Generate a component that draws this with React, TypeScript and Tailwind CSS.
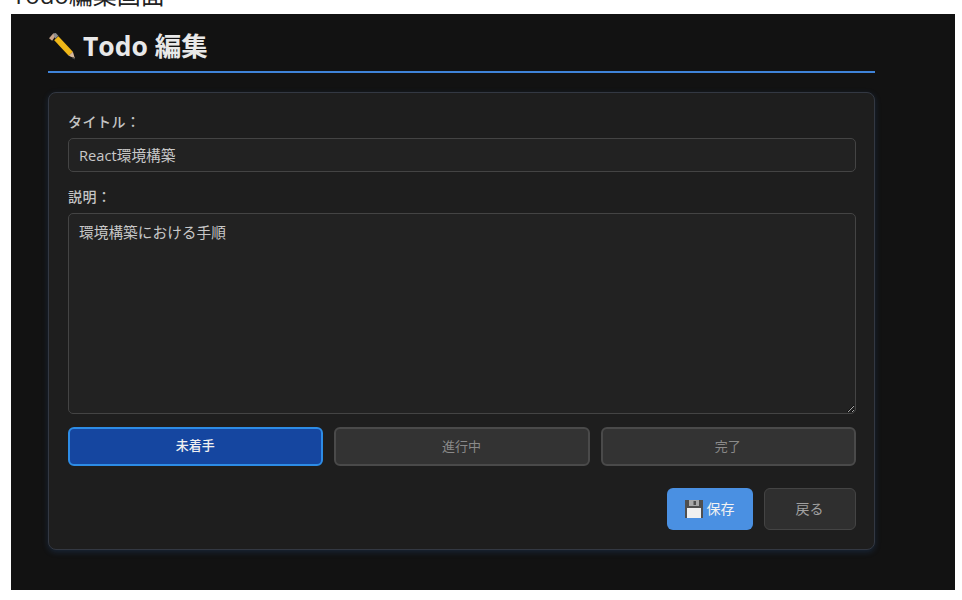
const fontStack = "[font-family:'Open_Sans','Noto_Sans_CJK_JP',sans-serif]";

function PencilIcon() {
  return (
    <svg width="29" height="29" viewBox="0 0 28 28" className="shrink-0">
      <path d="M1 6 L5 1.5 L8 3 L4 8.5 Z" fill="#c9a58c" />
      <path d="M5 1.5 L7.5 1 L10 3.5 L7 6.5 Z" fill="#8d8d8d" />
      <path d="M6 8 L10 4 L24 19 L20 23 Z" fill="#f0b818" />
      <path d="M20 23 L24 19 L26 25.5 Z" fill="#d9b99c" />
      <path d="M24 24 L26 25.5 L26 26.5 L23.5 25.5 Z" fill="#444444" />
    </svg>
  );
}

function FloppyIcon() {
  return (
    <svg width="18" height="18" viewBox="0 0 18 18" className="shrink-0">
      <path d="M0 0 H18 V18 H0 Z" fill="#4f4f4f" />
      <rect x="4" y="0" width="10" height="6" fill="#a8a8a8" />
      <rect x="8.5" y="1" width="2.5" height="4" fill="#4f4f4f" />
      <rect x="2" y="8" width="14" height="10" fill="#f0f0f0" />
    </svg>
  );
}

export default function App() {
  return (
    <div className={`h-[600px] w-[962px] overflow-hidden bg-white ${fontStack}`}>
      <div className="flex h-[14px] items-end overflow-hidden pl-[12px] text-[24px] leading-[24px] text-[#222222]">
        <span className="mb-[7px] shrink-0">Todo編集画面</span>
      </div>
      <main className="ml-[11px] h-[576px] w-[944px] bg-[#121212] pl-[37px] pr-[80px]">
        <h1 className="flex h-[59px] items-center gap-[6px] border-b-2 border-[#3f83d8] pt-[8px] text-[26.5px] font-bold text-[#e8e8e8]">
          <PencilIcon />
          <span>Todo 編集</span>
        </h1>
        <form className="mt-[19px] h-[458px] rounded-lg border border-[#333842] bg-[#1e1e1e] pl-[19px] pr-[18px] pt-[17px] shadow-[0_2px_6px_rgba(50,110,190,0.22)]">
          <label className="block text-sm font-medium leading-[23px] tracking-[0.5px] text-[#c4c4c4]">タイトル：</label>
          <input
            readOnly
            value="React環境構築"
            className="mt-[5px] block h-[34px] w-full rounded-[5px] border border-[#444444] bg-[#222222] px-[10px] pb-[2px] text-[14.7px] text-[#c8c8c8] outline-none"
          />
          <label className="mt-[13px] block text-sm font-medium leading-[23px] tracking-[0.5px] text-[#c4c4c4]">説明：</label>
          <textarea
            readOnly
            defaultValue="環境構築における手順"
            className="mt-[5px] block h-[201px] w-full rounded-[5px] border border-[#444444] bg-[#222222] px-[10px] pb-[8px] pt-[7px] text-[14.7px] text-[#c8c8c8] outline-none"
          />
          <div className="mt-[13px] grid grid-cols-3 gap-[11px]">
            <button type="button" className="h-[39px] rounded-[6px] border-2 border-[#2d8ce6] bg-[#1546a0] pb-[1px] pr-[1px] text-[13px] font-medium text-[#f0f0f0]">
              未着手
            </button>
            <button type="button" className="h-[39px] rounded-[6px] border-2 border-[#4a4a4a] bg-[#333333] pr-[1px] text-[13px] text-[#8a8a8a]">
              進行中
            </button>
            <button type="button" className="h-[39px] rounded-[6px] border-2 border-[#4a4a4a] bg-[#333333] pr-[1px] text-[13px] text-[#8a8a8a]">
              完了
            </button>
          </div>
          <div className="mt-[22px] flex justify-end gap-[11px]">
            <button type="button" className="flex h-[42px] w-[86px] items-center justify-center gap-[4px] rounded-[6px] bg-[#4a90e2] pr-[1px] text-sm text-[#f2f2f2]">
              <FloppyIcon />
              保存
            </button>
            <button type="button" className="h-[42px] w-[92px] rounded-[6px] border border-[#444444] bg-[#2f2f2f] pr-[1px] text-sm text-[#a0a0a0]">
              戻る
            </button>
          </div>
        </form>
      </main>
    </div>
  );
}
